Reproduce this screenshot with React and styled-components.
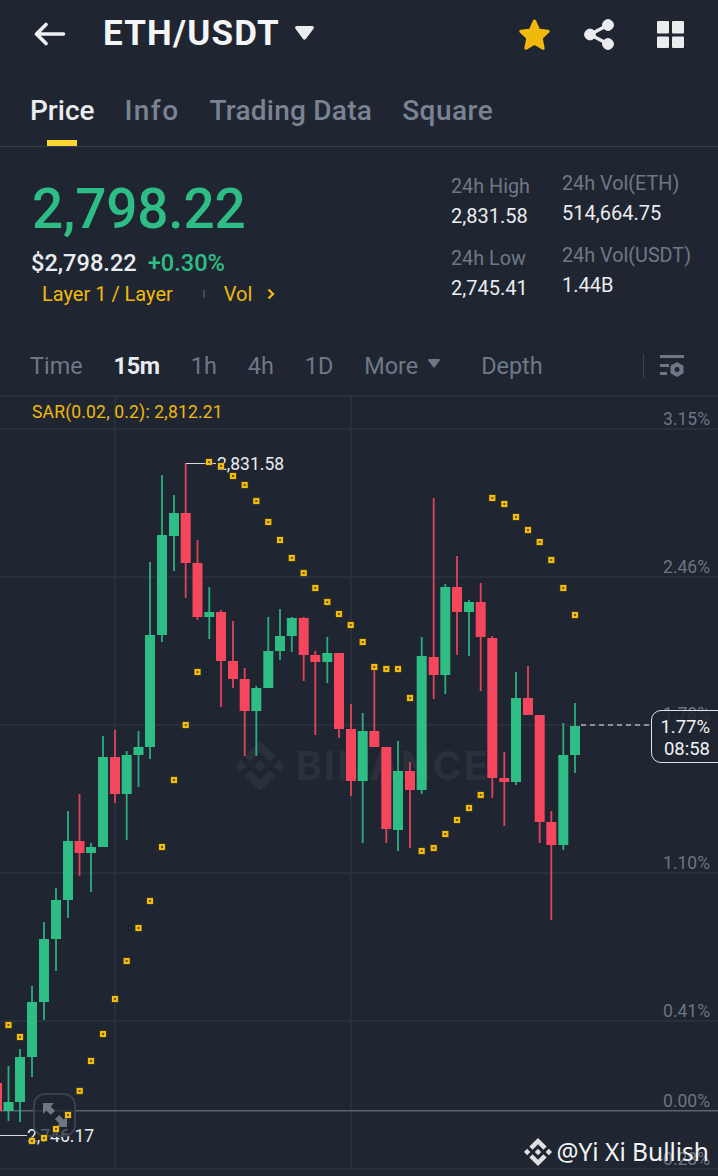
import React from "react";
import styled, { createGlobalStyle } from "styled-components";

const BG = "#1f2631";
const GRID = "#2a303b";
const GREEN = "#2ebd85";
const RED = "#f6465d";
const GOLD = "#f0b90b";
const MUTED = "#7a8392";
const LIGHT = "#eaecef";

const Global = createGlobalStyle`
  html, body { margin: 0; padding: 0; background: ${BG}; }
  * { box-sizing: border-box; }
`;

const Page = styled.div`
  width: 718px;
  height: 1176px;
  overflow: hidden;
  position: relative;
  background: ${BG};
  font-family: Roboto, "Liberation Sans", sans-serif;
  color: ${LIGHT};
  display: flex;
  flex-direction: column;
`;

const Header = styled.header`
  height: 68px;
  display: flex;
  align-items: center;
  padding: 0 34px;
`;
const BackIcon = styled.svg`
  width: 32px;
  height: 24px;
  margin-right: 37px;
`;
const Title = styled.h1`
  margin: 0;
  font-size: 35px;
  font-weight: 700;
  letter-spacing: 1.2px;
  color: #f4f5f6;
  line-height: 72px;
`;
const Caret = styled.svg`
  width: 19px;
  height: 14px;
  margin-left: 15px;
  margin-top: -2px;
`;
const HeaderActions = styled.div`
  margin-left: auto;
  display: flex;
  align-items: center;
`;
const ActionIcon = styled.svg`
  display: block;
  margin-left: ${(p) => p.$gap || 0}px;
`;

const Tabs = styled.nav`
  height: 79px;
  display: flex;
  gap: 30px;
  padding: 0 30px;
  border-bottom: 1px solid #363c48;
`;
const Tab = styled.div`
  position: relative;
  height: 78px;
  font-size: 28px;
  line-height: 86px;
  font-weight: 500;
  letter-spacing: ${(p) => p.$spacing ?? 0.25}px;
  color: ${(p) => (p.$active ? LIGHT : MUTED)};
  &::after {
    content: "";
    display: ${(p) => (p.$active ? "block" : "none")};
    position: absolute;
    left: 50%;
    bottom: 0;
    width: 30px;
    height: 6px;
    margin-left: -15px;
    background: #fcd535;
  }
`;

const Summary = styled.section`
  height: 198px;
  display: flex;
  padding-left: 31px;
`;
const PriceBlock = styled.div`
  width: 420px;
  padding-top: 28px;
`;
const MainPrice = styled.div`
  font-size: 55px;
  font-weight: 500;
  line-height: 68px;
  color: ${GREEN};
  letter-spacing: -0.2px;
  margin-left: 1px;
`;
const FiatRow = styled.div`
  margin-top: 5px;
  display: flex;
  gap: 11px;
  font-size: 23.6px;
  line-height: 30px;
  font-weight: 500;
`;
const Change = styled.span`
  color: ${GREEN};
`;
const TagRow = styled.div`
  margin-top: 3px;
  padding-left: 11px;
  display: flex;
  align-items: center;
  font-size: 20px;
  line-height: 26px;
  color: ${GOLD};
`;
const TagDivider = styled.span`
  width: 2px;
  height: 8px;
  background: #454b57;
  margin: 0 19px 0 30px;
`;
const TagChevron = styled.svg`
  width: 10px;
  height: 12px;
  margin-left: 14px;
`;
const StatColumn = styled.div`
  width: ${(p) => p.$width}px;
  padding-top: ${(p) => p.$top}px;
  display: flex;
  flex-direction: column;
`;
const StatLabel = styled.div`
  font-size: 19.8px;
  line-height: 26px;
  color: #6f7886;
`;
const StatValue = styled.div`
  font-size: 20px;
  line-height: 26px;
  margin-top: 3px;
  margin-bottom: 17px;
  color: ${LIGHT};
`;

const Toolbar = styled.div`
  height: 50px;
  display: flex;
  align-items: center;
  gap: 31px;
  padding: 0 34px 8px 30px;
  font-size: 23.4px;
  color: #6f7886;
`;
const Interval = styled.span`
  color: ${(p) => (p.$active ? LIGHT : "inherit")};
  font-weight: ${(p) => (p.$active ? 700 : 400)};
  letter-spacing: ${(p) => (p.$active ? -0.3 : 0)}px;
`;
const MoreItem = styled.span`
  display: flex;
  align-items: center;
  gap: 10px;
  margin-right: 10px;
`;
const MoreCaret = styled.svg`
  margin-top: -6px;
`;
const ToolbarEnd = styled.div`
  margin-left: auto;
  display: flex;
  align-items: center;
  gap: 16px;
`;
const ToolbarDivider = styled.span`
  width: 1px;
  height: 24px;
  background: #3c424e;
`;

const Chart = styled.div`
  position: relative;
  flex: 1;
  border-top: 2px solid ${GRID};
`;
const ChartLayer = styled.svg`
  position: absolute;
  left: 0;
  top: -2px;
  display: block;
`;
const SarLegend = styled.div`
  position: absolute;
  left: 32px;
  top: 3px;
  font-size: 17.5px;
  letter-spacing: 0.18px;
  line-height: 24px;
  color: ${GOLD};
`;
const AxisLabel = styled.div`
  position: absolute;
  right: 8px;
  font-size: 17.5px;
  line-height: 22px;
  color: #6c7583;
`;
const ExtremeLabel = styled.div`
  position: absolute;
  font-size: 17.5px;
  line-height: 22px;
  color: ${LIGHT};
`;
const ExtremeLine = styled.div`
  position: absolute;
  height: 1px;
  background: #d5d7da;
`;
const Countdown = styled.div`
  position: absolute;
  left: 651px;
  top: 313px;
  width: 80px;
  height: 53px;
  padding: 5px 20px 0 0;
  border: 1px solid #dfe2e6;
  border-radius: 10px;
  background: rgba(31, 38, 49, 0.86);
  text-align: right;
  font-size: 18.5px;
  line-height: 22px;
  color: #f2f3f5;
`;
const FullscreenButton = styled.div`
  position: absolute;
  left: 33px;
  top: 696px;
  width: 43px;
  height: 44px;
  border: 2px solid #3a404c;
  border-radius: 12px;
  background: rgba(31, 38, 49, 0.72);
  display: flex;
  align-items: center;
  justify-content: center;
`;
const BrandMark = styled.div`
  position: absolute;
  left: 235px;
  top: 344px;
  display: flex;
  align-items: center;
  gap: 11px;
  color: #2b313c;
  font-family: Inter, "Open Sans", sans-serif;
  font-weight: 700;
  font-size: 39px;
  line-height: 46px;
  letter-spacing: 2.3px;
`;
const Credit = styled.div`
  position: absolute;
  right: 9px;
  bottom: 8px;
  display: flex;
  align-items: center;
  gap: 4px;
  font-family: "Noto Sans", sans-serif;
  font-size: 24.5px;
  line-height: 32px;
  color: #f2f3f4;
`;

const BinanceLogo = ({ size, color }) => (
  <svg width={size} height={size} viewBox="0 0 126.61 126.61" fill={color}>
    <path d="M38.73 53.2l24.59-24.58 24.6 24.6 14.3-14.31L63.32 0 24.42 38.9z" />
    <path d="M0 63.31l14.3-14.31 14.31 14.31-14.31 14.3z" />
    <path d="M38.73 73.41l24.59 24.59 24.6-24.6 14.31 14.29-38.9 38.91-38.93-38.9z" />
    <path d="M98 63.31l14.3-14.31 14.31 14.3-14.31 14.32z" />
    <path d="M77.83 63.3L63.32 48.78 48.81 63.28l14.51 14.5z" />
  </svg>
);

const candles = [
  [-3, 1083, 1083, 1111, 1111, 0],
  [8.5, 1066, 1102, 1111, 1121, 1],
  [20, 1049, 1057, 1102, 1122, 1],
  [32, 986, 1002, 1057, 1077, 1],
  [44, 922, 939, 1002, 1020, 1],
  [56, 888, 900, 939, 971, 1],
  [68, 811, 841, 900, 918, 1],
  [79.5, 794, 841, 853, 876, 0],
  [91, 843, 847, 853, 892, 1],
  [103, 736, 757, 847, 847, 1],
  [115, 730, 757, 794, 803, 0],
  [126.7, 751, 755, 794, 840, 1],
  [138.5, 731, 747, 755, 787, 1],
  [150, 562, 635, 747, 759, 1],
  [162, 475, 535, 635, 642, 1],
  [174, 495, 513, 536, 571, 1],
  [185.7, 463, 513, 563, 598, 0],
  [197.5, 540, 563, 617, 620, 0],
  [209.3, 587, 612, 617, 639, 1],
  [221, 610, 612, 661, 707, 0],
  [233, 621, 661, 679, 688, 0],
  [244.7, 668, 679, 711, 756, 0],
  [256.3, 686, 688, 711, 756, 1],
  [268.3, 617, 651, 688, 688, 1],
  [280, 609, 636, 651, 660, 1],
  [291.8, 617, 618, 636, 652, 1],
  [303.7, 617, 618, 655, 681, 0],
  [315.3, 651, 655, 662, 735, 0],
  [327.3, 637, 653, 662, 683, 1],
  [339, 653, 653, 729, 738, 0],
  [351, 704, 729, 781, 796, 0],
  [362.7, 713, 731, 781, 843, 1],
  [374.3, 667, 731, 747, 747, 0],
  [386.3, 747, 747, 829, 843, 0],
  [398, 741, 771, 830, 851, 1],
  [410, 762, 771, 790, 848, 0],
  [421.7, 637, 656, 790, 794, 1],
  [433.7, 498, 657, 675, 699, 0],
  [445.3, 584, 587, 675, 694, 1],
  [457, 556, 587, 612, 655, 0],
  [469, 600, 602, 612, 656, 1],
  [480.7, 583, 602, 637, 691, 0],
  [492.3, 636, 638, 778, 798, 0],
  [504.3, 752, 778, 782, 826, 0],
  [516, 672, 698, 782, 785, 1],
  [528, 666, 698, 715, 715, 0],
  [539.7, 715, 715, 822, 843, 0],
  [551.3, 811, 822, 845, 920, 0],
  [563.3, 723, 755, 845, 850, 1],
  [575, 703, 726, 755, 773, 1],
];

const sar = [
  [8.5, 1025], [20, 1037], [32, 1141], [44, 1138], [56, 1129], [68, 1115], [79.7, 1091], [91, 1061],
  [103, 1034], [115, 999], [126.7, 961], [138.5, 928], [150, 901], [162, 847], [174, 780], [185.7, 725],
  [197.5, 672], [209, 462], [221, 466], [233, 476], [244.7, 485], [256.3, 501], [268.3, 522], [280, 540],
  [291.8, 558], [303.7, 573], [315.3, 588], [327.3, 602], [339, 614], [350.7, 625], [362.7, 642],
  [374.3, 667], [386.3, 669], [398, 669], [410, 698], [421.7, 851], [433.7, 848], [445.3, 834],
  [457, 820], [469, 808], [480.7, 795], [492.3, 498], [504.3, 504], [516, 517], [528, 530], [539.7, 542],
  [551.3, 560], [563.3, 588], [575, 615],
];

const axis = [
  ["3.15%", 419], ["2.46%", 567], ["1.78%", 714], ["1.10%", 863], ["0.41%", 1011], ["0.00%", 1101], ["-0.28%", 1159],
];
const gridRows = [429, 577, 725, 873, 1021, 1169];

export default function App() {
  return (
    <Page>
      <Global />
      <Header>
        <BackIcon viewBox="0 0 32 24" fill="none" stroke="#eef0f2" strokeWidth="3.6" strokeLinecap="round" strokeLinejoin="round">
          <path d="M29.5 12H3M12 2.5 2.5 12l9.5 9.5" />
        </BackIcon>
        <Title>ETH/USDT</Title>
        <Caret viewBox="0 0 19 14" fill="#eaecef">
          <path d="M1.8 0h15.4c1.5 0 2.2 1.6 1.3 2.8l-7.7 10.2c-.8 1-2 1-2.8 0L.5 2.8C-.4 1.6.3 0 1.8 0z" />
        </Caret>
        <HeaderActions>
          <ActionIcon width="31" height="31" viewBox="0 0 31 31" fill={GOLD}>
            <path d="M15.5 0.5c.7 0 1.2.4 1.5 1l3.7 8.3 8.6 1c1.4.2 1.9 1.9.9 2.8l-6.4 6 1.8 9.2c.3 1.4-1.2 2.4-2.4 1.7l-7.7-4.6-7.7 4.6c-1.2.7-2.7-.3-2.4-1.7l1.8-9.2-6.4-6c-1-.9-.5-2.6.9-2.8l8.6-1 3.7-8.3c.3-.6.8-1 1.5-1z" />
          </ActionIcon>
          <ActionIcon $gap={34} width="30" height="31" viewBox="0 0 30 31" fill="#eaecef" stroke="#eaecef">
            <circle cx="24" cy="6" r="5.4" />
            <circle cx="6" cy="15.5" r="5.4" />
            <circle cx="24" cy="25" r="5.4" />
            <path d="M24 6 6 15.5 24 25" fill="none" strokeWidth="3.4" />
          </ActionIcon>
          <ActionIcon $gap={43} width="27" height="27" viewBox="0 0 27 27" fill="#eaecef">
            <rect x="0" y="0" width="12" height="12.5" rx="1" />
            <rect x="15" y="0" width="12" height="12.5" rx="1" />
            <rect x="0" y="15.5" width="12" height="11.5" rx="1" />
            <rect x="15" y="15.5" width="12" height="11.5" rx="1" />
          </ActionIcon>
        </HeaderActions>
      </Header>

      <Tabs>
        <Tab $active $spacing={0}>Price</Tab>
        <Tab $spacing={1.4}>Info</Tab>
        <Tab>Trading Data</Tab>
        <Tab $spacing={0.5}>Square</Tab>
      </Tabs>

      <Summary>
        <PriceBlock>
          <MainPrice>2,798.22</MainPrice>
          <FiatRow>
            <span>$2,798.22</span>
            <Change>+0.30%</Change>
          </FiatRow>
          <TagRow>
            <span>Layer 1 / Layer</span>
            <TagDivider />
            <span>Vol</span>
            <TagChevron viewBox="0 0 10 12" fill="none" stroke={GOLD} strokeWidth="2.4">
              <path d="M2.5 1.5 7 6l-4.5 4.5" />
            </TagChevron>
          </TagRow>
        </PriceBlock>
        <StatColumn $width={111} $top={27}>
          <StatLabel>24h High</StatLabel>
          <StatValue>2,831.58</StatValue>
          <StatLabel>24h Low</StatLabel>
          <StatValue>2,745.41</StatValue>
        </StatColumn>
        <StatColumn $width={140} $top={24}>
          <StatLabel>24h Vol(ETH)</StatLabel>
          <StatValue>514,664.75</StatValue>
          <StatLabel>24h Vol(USDT)</StatLabel>
          <StatValue>1.44B</StatValue>
        </StatColumn>
      </Summary>

      <Toolbar>
        <Interval>Time</Interval>
        <Interval $active>15m</Interval>
        <Interval>1h</Interval>
        <Interval>4h</Interval>
        <Interval>1D</Interval>
        <MoreItem>
          More
          <MoreCaret width="12" height="9" viewBox="0 0 13 10" fill="#6f7886">
            <path d="M1 0h11c.9 0 1.3 1 .8 1.7L7.3 9.3c-.4.5-1.2.5-1.6 0L.2 1.7C-.3 1 .1 0 1 0z" />
          </MoreCaret>
        </MoreItem>
        <Interval>Depth</Interval>
        <ToolbarEnd>
          <ToolbarDivider />
          <svg width="24" height="23" viewBox="0 0 24 23" fill="#6f7886">
            <rect x="0" y="0" width="24" height="3" />
            <rect x="0" y="9" width="9" height="3" />
            <rect x="0" y="17" width="7" height="3" />
            <path fillRule="evenodd" d="M17 7l6.5 3.8v7.4L17 22l-6.5-3.8v-7.4zm0 5a2.5 2.5 0 1 0 0 5 2.5 2.5 0 0 0 0-5z" />
          </svg>
        </ToolbarEnd>
      </Toolbar>

      <Chart>
        <BrandMark>
          <BinanceLogo size={50} color="#2b313c" />
          BINANCE
        </BrandMark>

        <ChartLayer width="718" height="781" viewBox="0 395 718 781">
          {gridRows.map((y) => (
            <rect key={y} x="0" y={y - 1} width="718" height="2" fill={GRID} />
          ))}
          <rect x="114" y="395" width="2" height="773" fill={GRID} />
          <rect x="350" y="395" width="2" height="773" fill={GRID} />
          <rect x="0" y="1110" width="718" height="1.5" fill="#5c636f" />
          {candles.map(([x, wt, bt, bb, wb, up]) => {
            const c = up ? GREEN : RED;
            return (
              <g key={x}>
                <rect x={x - 0.9} y={wt} width="1.8" height={wb - wt} fill={c} opacity="0.9" />
                <rect x={x - 5} y={bt} width="10" height={bb - bt} fill={c} />
              </g>
            );
          })}
        </ChartLayer>

        <SarLegend>SAR(0.02, 0.2): 2,812.21</SarLegend>
        {axis.map(([t, y]) => (
          <AxisLabel key={t} style={{ top: y - 395 - 13 }}>
            {t}
          </AxisLabel>
        ))}
        <ExtremeLine style={{ left: 186, top: 66, width: 30 }} />
        <ExtremeLabel style={{ left: 217, top: 56 }}>2,831.58</ExtremeLabel>
        <ExtremeLine style={{ left: 0, top: 738, width: 27 }} />
        <ExtremeLabel style={{ left: 27, top: 728 }}>2,746.17</ExtremeLabel>
        <ChartLayer width="718" height="781" viewBox="0 395 718 781">
          <line x1="581" y1="725" x2="650" y2="725" stroke="#f2f3f5" strokeWidth="1" strokeDasharray="5 4" />
        </ChartLayer>
        <Countdown>
          1.77%
          <br />
          08:58
        </Countdown>
        <FullscreenButton>
          <svg width="26" height="26" viewBox="0 0 26 26" fill="#6f7682">
            <path d="M1 1h11L8.6 4.4 13 8.8 8.8 13 4.4 8.6 1 12z" />
            <path d="M25 25H14l3.4-3.4L13 17.2l4.2-4.2 4.4 4.4L25 14z" />
          </svg>
        </FullscreenButton>
        <ChartLayer width="718" height="781" viewBox="0 395 718 781">
          {sar.map(([x, y]) => (
            <g key={x}>
              <rect x={x - 3.5} y={y - 3.5} width="7" height="7" fill="#5a4a14" />
              <rect x={x - 3} y={y - 3} width="6" height="6" fill="#f3bb0c" />
              <rect x={x - 0.9} y={y - 0.9} width="1.8" height="1.8" fill="#4a3f18" />
            </g>
          ))}
        </ChartLayer>
      </Chart>

      <Credit>
        <BinanceLogo size={28} color="#dfe1e4" />
        @Yi Xi Bullish
      </Credit>
    </Page>
  );
}
